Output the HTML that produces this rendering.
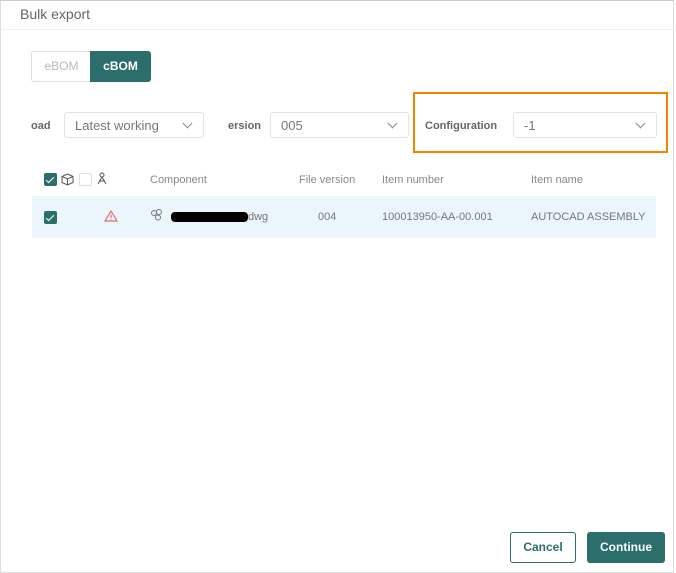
<!DOCTYPE html>
<html><head><style>
*{box-sizing:border-box;margin:0;padding:0}
body{width:676px;height:573px;background:#fff;font-family:"Liberation Sans",sans-serif;position:relative;overflow:hidden;color:#666}
.a{position:absolute}
.sel{position:absolute;border:1px solid #e3e3e3;border-radius:3px;height:26px;font-size:13px;color:#777;padding:5px 10px}
.chev{position:absolute;right:12px;top:7px;width:7px;height:7px;border-right:1.2px solid #888;border-bottom:1.2px solid #888;transform:rotate(45deg)}
.lbl{position:absolute;font-size:11px;font-weight:bold;color:#666}
.th{position:absolute;top:174px;font-size:11px;color:#888}
.td{position:absolute;top:211px;font-size:11px;color:#777}
.cb{position:absolute;width:13px;height:13px;border-radius:2px;background:#2b6e6b}
.cb::after{content:"";position:absolute;left:4px;top:1.5px;width:3px;height:7px;border-right:1.5px solid #fff;border-bottom:1.5px solid #fff;transform:rotate(45deg)}
</style></head><body>
<div class="a" style="left:0;top:0;width:674px;height:573px;border:1px solid #ddd;border-top:1px solid #ccc"></div>
<div class="a" style="left:20px;top:6px;font-size:14px;color:#666">Bulk export</div>
<div class="a" style="left:1px;top:29px;width:672px;height:1px;background:#f0f0f0"></div>
<div class="a" style="left:31px;top:51px;width:60px;height:31px;border:1px solid #ddd;border-right:none;border-radius:3px 0 0 3px;font-size:12px;color:#bbb;text-align:center;line-height:29px">eBOM</div>
<div class="a" style="left:90px;top:51px;width:61px;height:31px;background:#2b6e6b;border-radius:0 3px 3px 0;font-size:12px;font-weight:bold;color:#fff;text-align:center;line-height:31px">cBOM</div>
<div class="lbl" style="left:31px;top:120px">oad</div>
<div class="sel" style="left:64px;top:112px;width:140px">Latest working<div class="chev"></div></div>
<div class="lbl" style="left:228px;top:120px">ersion</div>
<div class="sel" style="left:270px;top:112px;width:139px">005<div class="chev"></div></div>
<div class="lbl" style="left:425px;top:120px">Configuration</div>
<div class="sel" style="left:513px;top:112px;width:144px">-1<div class="chev"></div></div>
<div class="a" style="left:413px;top:92px;width:255px;height:61px;border:2.5px solid #f58300"></div>
<div class="cb" style="left:44px;top:173px"></div>
<svg class="a" style="left:61px;top:173px" width="13" height="13"><path d="M6.5 1L12 3.5V9.5L6.5 12L1 9.5V3.5Z M1 3.5L6.5 6L12 3.5 M6.5 6V12" fill="none" stroke="#555" stroke-width="1"/></svg>
<div class="a" style="left:79px;top:173px;width:13px;height:13px;border:1px solid #ddd;border-radius:2px"></div>
<svg class="a" style="left:96px;top:172px" width="13" height="14"><circle cx="6" cy="3" r="2" fill="none" stroke="#555"/><path d="M6 5L2 12M6 5L10 12M3 9H9" fill="none" stroke="#555"/></svg>
<div class="th" style="left:150px">Component</div>
<div class="th" style="left:299px">File version</div>
<div class="th" style="left:382px">Item number</div>
<div class="th" style="left:531px">Item name</div>
<div class="a" style="left:32px;top:196px;width:624px;height:42px;background:#eaf6fb"></div>
<div class="cb" style="left:44px;top:211px"></div>
<svg class="a" style="left:104px;top:210px" width="14" height="12"><path d="M7 1L13 11H1Z" fill="none" stroke="#e07070" stroke-width="1.2"/><path d="M7 4.5V8M7 9.2V10" stroke="#e07070" stroke-width="1.2"/></svg>
<svg class="a" style="left:150px;top:208px" width="14" height="14"><circle cx="4" cy="5" r="2.5" fill="none" stroke="#777"/><circle cx="9" cy="4" r="2.5" fill="none" stroke="#777"/><circle cx="8" cy="9.5" r="2.5" fill="none" stroke="#777"/></svg>
<div class="a" style="left:171px;top:212px;width:77px;height:10px;background:#000;border-radius:4px"></div>
<div class="td" style="left:248px">dwg</div>
<div class="td" style="left:318px">004</div>
<div class="td" style="left:382px">100013950-AA-00.001</div>
<div class="td" style="left:531px">AUTOCAD ASSEMBLY</div>
<div class="a" style="left:510px;top:532px;width:66px;height:31px;border:1px solid #2b6e6b;border-radius:3px;font-size:12px;font-weight:bold;color:#2b6e6b;text-align:center;line-height:29px">Cancel</div>
<div class="a" style="left:587px;top:532px;width:78px;height:31px;background:#2b6e6b;border-radius:3px;font-size:12px;font-weight:bold;color:#fff;text-align:center;line-height:31px">Continue</div>
</body></html>
